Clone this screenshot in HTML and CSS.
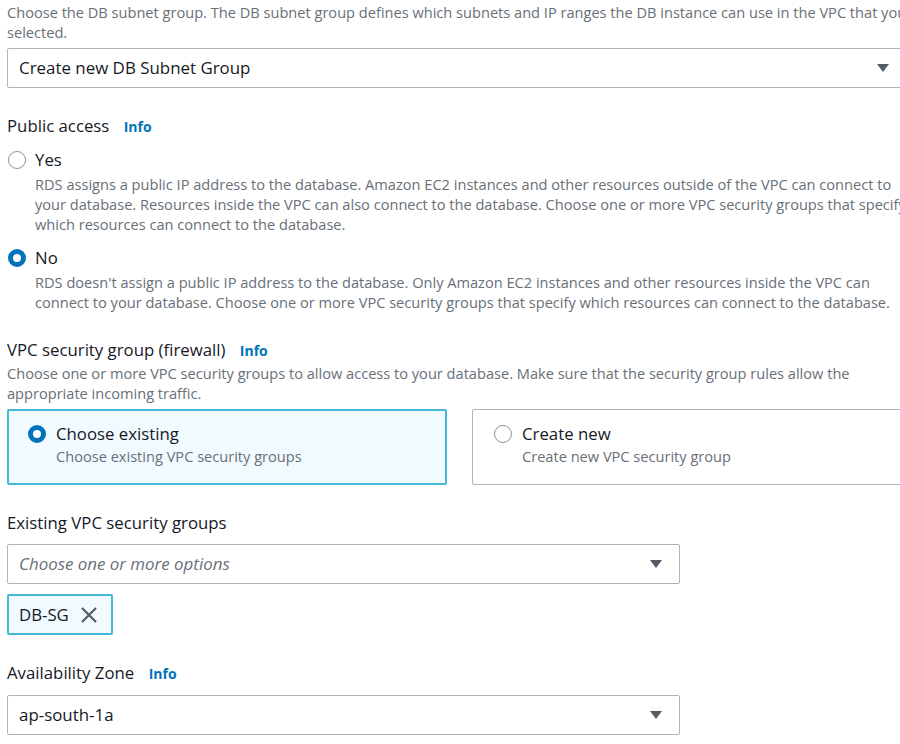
FILE: index.html
```html
<!DOCTYPE html>
<html lang="en">
<head>
<meta charset="utf-8">
<title>Connectivity</title>
<link rel="stylesheet" href="styles.css">
</head>
<body>
<div class="page">
  <p class="desc">Choose the DB subnet group. The DB subnet group defines which subnets and IP ranges the DB instance can use in the VPC that you selected.</p>
  <div class="select wide">
    <span class="value">Create new DB Subnet Group</span>
    <svg class="caret" viewBox="0 0 14 10" width="14" height="10"><path d="M1 1h12L7 9z" fill="#545b64"/></svg>
  </div>

  <div class="field-label gap-lg">Public access <a class="info">Info</a></div>
  <div class="radio-group">
    <div class="radio-opt">
      <span class="radio"></span>
      <div class="opt-text">
        <div class="opt-title">Yes</div>
        <div class="opt-desc">RDS assigns a public IP address to the database. Amazon EC2 instances and other resources outside of the VPC can connect to your database. Resources inside the VPC can also connect to the database. Choose one or more VPC security groups that specify which resources can connect to the database.</div>
      </div>
    </div>
    <div class="radio-opt">
      <span class="radio checked"></span>
      <div class="opt-text">
        <div class="opt-title">No</div>
        <div class="opt-desc">RDS doesn't assign a public IP address to the database. Only Amazon EC2 instances and other resources inside the VPC can connect to your database. Choose one or more VPC security groups that specify which resources can connect to the database.</div>
      </div>
    </div>
  </div>

  <div class="field-label gap-lg">VPC security group (firewall) <a class="info">Info</a></div>
  <p class="desc">Choose one or more VPC security groups to allow access to your database. Make sure that the security group rules allow the appropriate incoming traffic.</p>
  <div class="tiles">
    <div class="tile selected">
      <span class="radio checked"></span>
      <div class="opt-text">
        <div class="opt-title">Choose existing</div>
        <div class="opt-desc">Choose existing VPC security groups</div>
      </div>
    </div>
    <div class="tile">
      <span class="radio"></span>
      <div class="opt-text">
        <div class="opt-title">Create new</div>
        <div class="opt-desc">Create new VPC security group</div>
      </div>
    </div>
  </div>

  <div class="field-label gap-lg">Existing VPC security groups</div>
  <div class="select narrow">
    <span class="placeholder">Choose one or more options</span>
    <svg class="caret" viewBox="0 0 14 10" width="14" height="10"><path d="M1 1h12L7 9z" fill="#545b64"/></svg>
  </div>
  <div class="token">
    <span>DB-SG</span>
    <svg viewBox="0 0 18 18" width="18" height="18"><path d="M2 2l14 14M16 2L2 16" stroke="#545b64" stroke-width="2.2" fill="none"/></svg>
  </div>

  <div class="field-label gap-lg">Availability Zone <a class="info">Info</a></div>
  <div class="select narrow">
    <span class="value">ap-south-1a</span>
    <svg class="caret" viewBox="0 0 14 10" width="14" height="10"><path d="M1 1h12L7 9z" fill="#545b64"/></svg>
  </div>
</div>
</body>
</html>
```

FILE: styles.css
```css
html, body {
  margin: 0;
  padding: 0;
  background: #ffffff;
  overflow: hidden;
}
body {
  font-family: "Open Sans", "Liberation Sans", sans-serif;
  color: #16191f;
}
.page {
  width: 905px;
  padding: 2px 0 0 7px;
  display: flex;
  flex-direction: column;
  align-items: flex-start;
}
.desc {
  margin: 0;
  font-size: 14.6px;
  line-height: 20px;
  color: #687078;
  width: 905px;
}
.select {
  box-sizing: border-box;
  height: 40px;
  border: 1px solid #aab7b8;
  border-radius: 2px;
  display: flex;
  align-items: center;
  justify-content: space-between;
  padding: 0 10px 2px 11px;
  margin-top: 6px;
  font-size: 16.9px;
  color: #16191f;
}
.select.wide { width: 905px; padding-right: 21px; }
.select.narrow { width: 673px; margin-top: 9px; padding-right: 16px; }
.placeholder { font-style: italic; color: #687078; }
.caret { display: block; margin-top: 2px; }
.field-label {
  font-size: 16.8px;
  line-height: 24px;
  color: #16191f;
}
.gap-lg { margin-top: 26px; }
.info {
  font-size: 14px;
  font-weight: 700;
  color: #0073bb;
  margin-left: 10px;
}
.radio-group {
  display: flex;
  flex-direction: column;
  gap: 12px;
  margin-top: 9px;
}
.radio-opt {
  display: flex;
  gap: 9px;
  align-items: flex-start;
}
.radio {
  box-sizing: border-box;
  flex: none;
  width: 18px;
  height: 18px;
  border-radius: 50%;
  border: 1.5px solid #879596;
  background: #fff;
  margin-top: 3px;
  margin-left: 1px;
}
.radio.checked {
  border: 5px solid #0073bb;
}
.opt-title {
  font-size: 16.8px;
  line-height: 24px;
  color: #16191f;
}
.opt-desc {
  font-size: 14.6px;
  line-height: 20px;
  color: #687078;
  margin-top: 2px;
}
.radio-opt .opt-desc { width: 885px; }
.tiles {
  display: grid;
  grid-template-columns: 440px 440px;
  gap: 25px;
  margin-top: 6px;
}
.tile {
  box-sizing: border-box;
  height: 76px;
  display: flex;
  gap: 10px;
  align-items: flex-start;
  padding: 12px 20px 0 21px;
  border: 1px solid #aab7b8;
  border-radius: 2px;
  background: #fff;
}
.tile .radio { margin-left: 0; }
.tile .opt-desc { margin-top: 0; }
.tile.selected {
  border: 2px solid #44b9d6;
  background: #f1faff;
  padding: 11px 20px 0 19px;
}
.token {
  box-sizing: border-box;
  margin-top: 10px;
  height: 41px;
  width: 106px;
  display: flex;
  align-items: center;
  gap: 11px;
  padding: 0 0 0 10px;
  border: 2px solid #44b9d6;
  border-radius: 2px;
  background: #f1faff;
  font-size: 16.8px;
  color: #16191f;
}
.token svg { display: block; }
```
